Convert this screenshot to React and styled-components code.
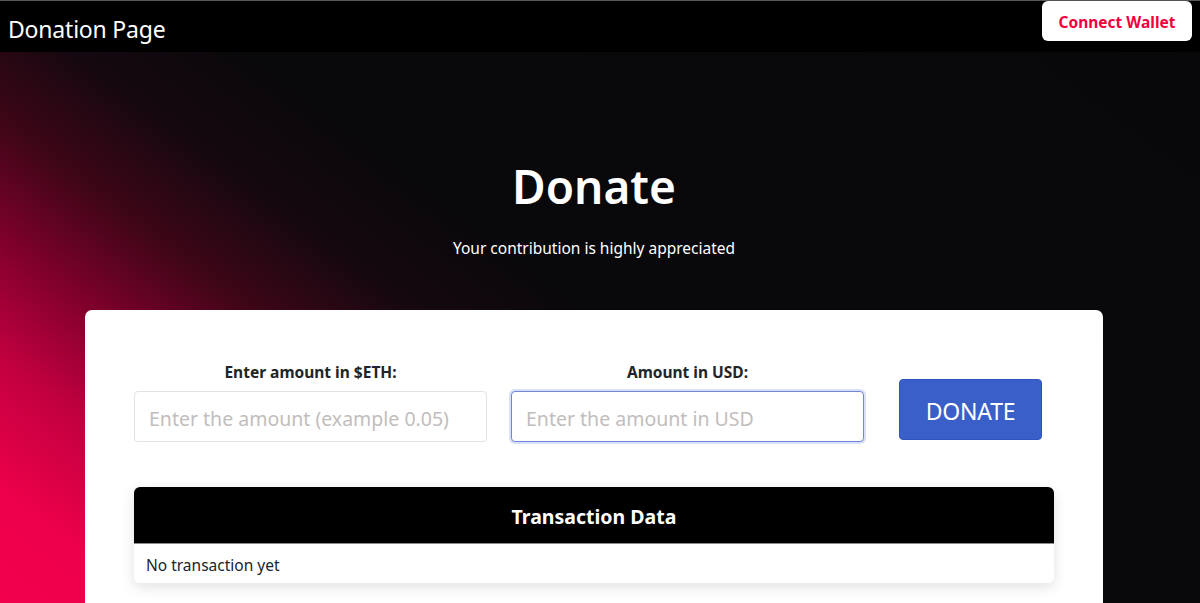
import React from "react";
import styled, { createGlobalStyle, css } from "styled-components";

const Global = createGlobalStyle`
  * { box-sizing: border-box; }
  html, body { margin: 0; padding: 0; overflow: hidden; }
  body {
    font-family: "Noto Sans", "Open Sans", Arial, sans-serif;
    background: #08080b;
    color: #212529;
  }
`;

const Page = styled.div`
  display: flex;
  flex-direction: column;
  min-height: 100vh;
`;

const TopBar = styled.header`
  height: 52px;
  background: #000;
  border-top: 1px solid #555;
  display: flex;
  justify-content: space-between;
  align-items: flex-start;
  padding: 0 8px;
`;

const Brand = styled.div`
  color: #fff;
  font-size: 23px;
  line-height: 29px;
  margin-top: 14px;
  letter-spacing: -0.2px;
`;

const WalletButton = styled.button`
  height: 40px;
  width: 150px;
  border: none;
  border-radius: 6px;
  background: #fff;
  color: #f0003c;
  font-family: inherit;
  font-size: 15.5px;
  font-weight: 700;
  padding-top: 2px;
  cursor: pointer;
`;

const Main = styled.main`
  flex: 1;
  display: flex;
  flex-direction: column;
  align-items: center;
  padding: 106px 12px 0 0;
  background: linear-gradient(
    37deg,
    #f3004c 0%,
    #ee004a 10%,
    #c20040 19%,
    #80002c 27%,
    #3e0617 35%,
    #160810 43%,
    #09080b 52%,
    #08080b 100%
  );
`;

const Heading = styled.h1`
  margin: 0;
  color: #fff;
  font-size: 46px;
  font-weight: 600;
  line-height: 56px;
`;

const Tagline = styled.p`
  margin: 22px 0 0;
  color: #fff;
  font-size: 15.5px;
  line-height: 24px;
`;

const Card = styled.section`
  margin-top: 50px;
  width: 1018px;
  background: #fff;
  border-radius: 7px 7px 0 0;
  padding: 52px 49px 60px;
`;

const FormRow = styled.div`
  display: flex;
  align-items: flex-end;
`;

const Field = styled.div`
  width: 353px;
  display: flex;
  flex-direction: column;
  align-items: center;
  margin-right: ${(p) => p.$gap}px;
`;

const Label = styled.label`
  font-size: 15.5px;
  font-weight: 700;
  line-height: 20px;
  margin-bottom: 9px;
  color: #212529;
`;

const Input = styled.input`
  width: 100%;
  height: 51px;
  padding: 3px 14px 0;
  font-family: inherit;
  font-size: 19.5px;
  color: #212529;
  border-radius: 4px;
  outline: none;
  background: #fff;
  border: 1px solid #e2e2e2;
  &::placeholder { color: #c2bdbd; }
  ${(p) =>
    p.$focused &&
    css`
      border: 1.5px solid #6f86dc;
      box-shadow: 0 0 0 2px rgba(120, 145, 230, 0.28);
    `}
`;

const DonateButton = styled.button`
  width: 143px;
  height: 61px;
  margin-bottom: 2px;
  padding-top: 3px;
  background: #3a5fc8;
  border: 1px solid #2f55c0;
  border-radius: 4px;
  color: #fff;
  font-family: inherit;
  font-size: 23px;
  letter-spacing: -0.2px;
  cursor: pointer;
`;

const TableWrap = styled.div`
  margin-top: 45px;
  width: 920px;
  border-radius: 6px;
  overflow: hidden;
  box-shadow: 0 4px 14px rgba(0, 0, 0, 0.12);
`;

const TableHead = styled.div`
  height: 57px;
  padding-top: 3px;
  background: #000;
  border-bottom: 1px solid #8a8a8a;
  display: flex;
  align-items: center;
  justify-content: center;
  color: #fff;
  font-size: 19.5px;
  font-weight: 700;
`;

const TableRow = styled.div`
  height: 39px;
  padding: 3px 12px 0;
  display: flex;
  align-items: center;
  font-size: 15.5px;
  background: #fff;
  color: #212529;
`;

export default function App() {
  return (
    <>
      <Global />
      <Page>
        <TopBar>
          <Brand>Donation Page</Brand>
          <WalletButton>Connect Wallet</WalletButton>
        </TopBar>
        <Main>
          <Heading>Donate</Heading>
          <Tagline>Your contribution is highly appreciated</Tagline>
          <Card>
            <FormRow>
              <Field $gap={24}>
                <Label>Enter amount in $ETH:</Label>
                <Input placeholder="Enter the amount (example 0.05)" />
              </Field>
              <Field $gap={35}>
                <Label>Amount in USD:</Label>
                <Input $focused placeholder="Enter the amount in USD" />
              </Field>
              <DonateButton>DONATE</DonateButton>
            </FormRow>
            <TableWrap>
              <TableHead>Transaction Data</TableHead>
              <TableRow>No transaction yet</TableRow>
            </TableWrap>
          </Card>
        </Main>
      </Page>
    </>
  );
}
